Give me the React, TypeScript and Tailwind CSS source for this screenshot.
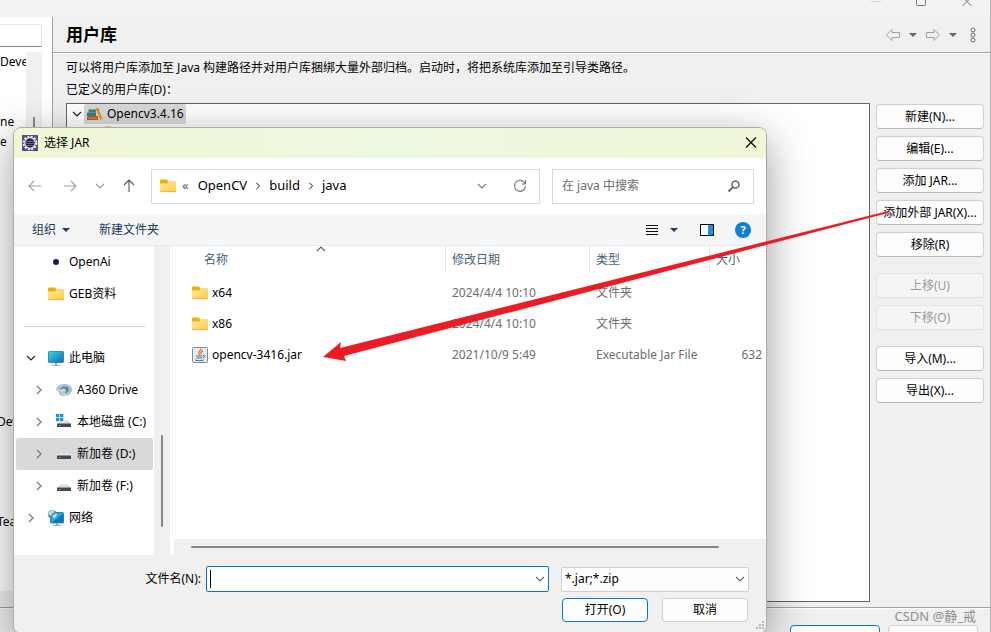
import type { ReactNode } from 'react';

const FONT = "font-['Noto_Sans','Noto_Sans_CJK_SC',sans-serif]";

const SIDE_BUTTONS = [
  [{ label: '新建(N)...' }, { label: '编辑(E)...' }, { label: '添加 JAR...' }, { label: '添加外部 JAR(X)...' }, { label: '移除(R)' }],
  [{ label: '上移(U)', disabled: true }, { label: '下移(O)', disabled: true }],
  [{ label: '导入(M)...' }, { label: '导出(X)...' }],
];

function FolderIcon() {
  return (
    <svg viewBox="0 0 16 14" className="w-4 h-3.5 shrink-0">
      <defs>
        <linearGradient id="folder" x1="0" y1="0" x2="1" y2="1">
          <stop offset="0" stopColor="#ffeaa6" />
          <stop offset="1" stopColor="#ffcb3d" />
        </linearGradient>
      </defs>
      <path d="M0 1.500A1 1 0 0 1 1 .5h5.500a1 1 0 0 1 1 .8L8 2.500h7a1 1 0 0 1 1 1V6H0z" fill="#f3ad0a" />
      <path d="M0 4.500h7L8.500 3H15.500a.5.5 0 0 1 .5.5V12a1 1 0 0 1-1 1H1a1 1 0 0 1-1-1z" fill="url(#folder)" />
      <path d="M0 12.600h16" fill="none" stroke="#e8ad35" strokeWidth=".8" />
    </svg>
  );
}

function MonitorIcon() {
  return (
    <svg viewBox="0 0 16 16" className="size-4 shrink-0">
      <defs>
        <linearGradient id="screen" x1="0" y1="0" x2="1" y2="1">
          <stop offset="0" stopColor="#3adbe0" />
          <stop offset="1" stopColor="#0b66b8" />
        </linearGradient>
      </defs>
      <rect x=".5" y="1.500" width="15" height="11" rx=".8" fill="url(#screen)" stroke="#17809f" strokeWidth=".8" />
      <path d="M7 13h2v2H7z" fill="#9aa7b0" />
      <path d="M4 15.500h8" stroke="#9aa7b0" />
    </svg>
  );
}

function NetworkIcon() {
  return (
    <svg viewBox="0 0 16 16" className="size-4 shrink-0">
      <rect x="2.500" y="2.500" width="13" height="10.500" rx=".8" fill="#22a7dc" stroke="#0f6ea8" strokeWidth=".8" />
      <path d="M4 12.600L15 4v8.600z" fill="#0b75bf" />
      <path d="M8 13h2v2H8z" fill="#9aa7b0" />
      <path d="M5 15.500h8" stroke="#9aa7b0" />
      <circle cx="4.500" cy="4.500" r="4.500" fill="#4a92b8" />
      <path d="M.8 2.600C1.800.8 4 0 6 .4L6.500 2 4 3.500 3 5.500.3 4.500zM5 5l3.600-1.500.3 2L6 8.700 4.500 7z" fill="#b8deea" />
    </svg>
  );
}

function DriveIcon({ system = false }: { system?: boolean }) {
  return (
    <svg viewBox="0 0 16 16" className="size-4 shrink-0">
      <path d="M3.500 6.500h9L15 10H1z" fill="#dfe1e6" />
      <rect x="1" y="9.500" width="14" height="3.500" rx=".6" fill="#45484b" />
      <path d="M3 11.500h1.500" stroke="#3ee04a" />
      {system && (
        <>
          <path d="M0 0h8v8H0z" fill="#fff" />
          <path d="M0 0h3.300v3.300H0zM4 0h3.300v3.300H4zM0 4h3.300v3.300H0zM4 4h3.300v3.300H4z" fill="#0d93e3" />
        </>
      )}
    </svg>
  );
}

function CloudDriveIcon() {
  return (
    <svg viewBox="0 0 16 16" className="size-4 shrink-0">
      <path d="M0 8c.5-3.500 4-6 8.500-6 4.500 0 7.500 2.500 7.500 5.500 0 3.500-3 6.500-8 6.500-3 0-5-1.500-5.500-4C2 9 1 8.500 0 8z" fill="#a9c1ce" />
      <path d="M3.500 7.500C5 4.500 11 3.500 12.500 6.500c1 2.500-1.500 4.500-4 4.500 2-1 2.500-3 1-4-1.500-.8-4-.5-6 .5z" fill="#55809a" />
      <path d="M1 8.200c2-.7 4 0 4.500 1.500.4 1.500 1.500 2.500 4 2.600" fill="none" stroke="#e3edf2" />
      <path d="M6.500 9c0-1 1.500-1.500 2.300-.8" fill="none" stroke="#eef4f7" strokeWidth="1.200" />
    </svg>
  );
}

function JarIcon() {
  return (
    <svg viewBox="0 0 16 16" className="size-4 shrink-0" fill="none">
      <rect x=".5" y=".5" width="15" height="15" rx="1" fill="#e6ecf1" stroke="#7b8c9b" />
      <path d="M9 1.500c1 2-3 2.800-2.200 4.500.3.700 1 1 1 2M11 4c-2 .8-2.500 1.800-1.500 3.200" stroke="#f0781e" strokeWidth="1.400" />
      <path d="M4 9h6.500M4.500 11h5.500M3 13c2 .9 7 .9 9-.2M11 8.500c2.200-.5 2.500 1.800 0 2.300" stroke="#4a6d8c" />
    </svg>
  );
}

function LibraryIcon() {
  return (
    <svg viewBox="0 0 16 14" className="w-4 h-3.5 shrink-0">
      <path d="M1.500 2.500h7.500v3H1.500z" fill="#2f8a6b" />
      <path d="M0 5.500h9V9H0z" fill="#2e7f96" />
      <path d="M1 9h10v4H0v-3z" fill="#bf5b2c" />
      <path d="M1.500 11.200h8.500" stroke="#e0a070" strokeWidth=".8" />
      <path d="M8.500 1.500L11 .5 15.500 11.500 13 13z" fill="#e69a2e" />
      <path d="M10 3.200l2-.8" stroke="#b86f1a" />
    </svg>
  );
}

function EclipseIcon() {
  return (
    <svg viewBox="0 0 16 16" className="size-4 shrink-0">
      <path d="M0 0h16v16H0z" fill="#5d4a80" />
      <circle cx="8" cy="8" r="6.500" fill="none" stroke="#f4f4f4" strokeWidth="1.800" strokeDasharray="1.900 1.500" />
      <circle cx="8" cy="8" r="5.300" fill="#2c2644" stroke="#eee" strokeWidth="1.200" />
      <path d="M4 6.500h8M3.500 8.500h9M4.500 10.500h7" stroke="#6f6a94" strokeWidth=".9" />
    </svg>
  );
}

function Chevron({ dir = 'down', className = '' }: { dir?: 'down' | 'right' | 'up'; className?: string }) {
  const d = { down: 'M1 3l4 4 4-4', right: 'M3 1l4 4-4 4', up: 'M1 7l4-4 4 4' }[dir];
  return (
    <svg viewBox="0 0 10 10" className={`size-2.5 shrink-0 ${className}`} fill="none" stroke="currentColor">
      <path d={d} strokeWidth="1.200" />
    </svg>
  );
}

function Caret({ className = '' }: { className?: string }) {
  return (
    <svg viewBox="0 0 8 4" className={`w-2 h-1 shrink-0 ${className}`} fill="currentColor">
      <path d="M0 0h8L4 4z" />
    </svg>
  );
}

function NavArrow({ d, className }: { d: string; className: string }) {
  return (
    <svg viewBox="0 0 14 14" className={`size-3.5 ${className}`} fill="none" stroke="currentColor" strokeWidth="1.100">
      <path d={d} />
    </svg>
  );
}

function TitleControls() {
  return (
    <div className="h-[17px] bg-[#f3f3f3] flex justify-end pr-[17px]">
      <svg viewBox="0 0 102 8" className="w-[102px] h-2" fill="none" stroke="#777">
        <path d="M0 1.500h10" stroke="#d5d5d5" />
        <path d="M45.500 0v4.500q0 1 1 1h7q1 0 1-1V0" />
        <path d="M91.500 6l9-9M100.500 6l-9-9" />
      </svg>
    </div>
  );
}

// Visible part of the preference tree, one entry per 20px row
const TREE_ROWS: Record<number, string> = { 0: 'Deve', 3: 'ne', 4: 'e', 18: 'Dev', 23: 'Tea' };

function PreferenceTree() {
  return (
    <aside className="w-[53px] shrink-0 bg-white border-r border-[#a0a0a0] flex flex-col overflow-hidden">
      <input aria-label="过滤" className="mt-[7px] mr-[10px] h-[23px] w-[42px] bg-white border border-l-0 border-[#e5e5e5] border-b-[#868686]" />
      <div className="mt-[5px] flex flex-1 min-h-0">
        <ul className="w-[26px] overflow-hidden whitespace-nowrap">
          {Array.from({ length: 26 }, (_, i) => (
            <li key={i} className={`h-5 leading-5 ${i > 10 ? '-ml-[3px]' : ''}`}>
              {TREE_ROWS[i]}
            </li>
          ))}
        </ul>
        <div className="w-4 bg-[#f0f0f0] flex justify-center pt-[65px] pb-24">
          <div className="w-0.5 bg-[#868686]" />
        </div>
      </div>
      <div className="h-4 bg-[#f0f0f0] w-[42px]" />
    </aside>
  );
}

function LibraryPage() {
  return (
    <main className="flex-1 min-w-0 flex flex-col">
      <header className="h-9 shrink-0 flex items-center justify-between pl-[13px] pr-[13px] border-b border-[#a0a0a0] shadow-[0_1px_0_#fff]">
        <h1 className="text-[17px] leading-6 font-bold">用户库</h1>
        <div className="flex items-center text-[#666]">
          <button type="button" aria-label="后退">
            <svg viewBox="0 0 16 14" className="w-4 h-3.5" fill="none" stroke="#a0a0a0">
              <path d="M1.500 7L7 1.500v3h7.500v5H7v3z" strokeLinejoin="round" />
            </svg>
          </button>
          <Caret className="ml-2" />
          <button type="button" aria-label="前进" className="ml-2">
            <svg viewBox="0 0 16 14" className="w-4 h-3.5" fill="none" stroke="#a0a0a0">
              <path d="M14.500 7L9 1.500v3H1.500v5H9v3z" strokeLinejoin="round" />
            </svg>
          </button>
          <Caret className="ml-2" />
          <button type="button" aria-label="菜单" className="ml-3">
            <svg viewBox="0 0 8 16" className="w-2 h-4" fill="#fff" stroke="#666">
              <circle cx="4" cy="3" r="2" />
              <circle cx="4" cy="8" r="2" />
              <circle cx="4" cy="13" r="2" />
            </svg>
          </button>
        </div>
      </header>
      <div className="flex-1 min-h-0 flex flex-col pl-[13px] pr-[6px] pt-1 pb-[5px]">
        <p className="leading-[22px]">可以将用户库添加至 Java 构建路径并对用户库捆绑大量外部归档。启动时，将把系统库添加至引导类路径。</p>
        <p className="leading-[22px]">已定义的用户库(D)：</p>
        <div className="mt-0.5 flex-1 min-h-0 flex gap-1.5">
          <div className="flex-1 bg-white border border-[#646464] pl-[5px] overflow-hidden">
            <div className="flex items-center">
              <Chevron className="text-[#222] mr-[2px]" />
              <div className="h-5 flex items-center gap-1 bg-[#d9d9d9] rounded-[2px] pl-[3px] pr-0.5">
                <LibraryIcon />
                <span className="leading-5">Opencv3.4.16</span>
              </div>
            </div>
            <div className="pl-8 pt-0.5">
              <FolderIcon />
            </div>
          </div>
          <div className="w-[108px] pt-px flex flex-col gap-4">
            {SIDE_BUTTONS.map((group, i) => (
              <div key={i} className="flex flex-col gap-[7px]">
                {group.map(({ label, disabled }: { label: string; disabled?: boolean }) => (
                  <button
                    key={label}
                    type="button"
                    disabled={disabled}
                    className="h-[25px] rounded-[4px] border border-[#d0d0d0] border-b-[#b9b9b9] bg-[#fdfdfd] whitespace-nowrap flex items-center justify-center disabled:bg-[#f5f5f5] disabled:border-[#e2e2e2] disabled:text-[#9b9b9b]"
                  >
                    {label}
                  </button>
                ))}
              </div>
            ))}
          </div>
        </div>
      </div>
    </main>
  );
}

interface PlaceProps {
  icon: ReactNode;
  label: string;
  chevron?: 'down' | 'right';
  nested?: boolean;
  selected?: boolean;
}

function Place({ icon, label, chevron, nested, selected }: PlaceProps) {
  return (
    <li
      className={`h-8 ml-0.5 mr-px flex items-center whitespace-nowrap rounded-[2px] ${nested ? 'pl-[18px]' : 'pl-[10px]'} ${
        selected ? 'bg-[#d9d9d9]' : ''
      }`}
    >
      <span className={`flex justify-center w-2.5 mr-3 ${chevron === 'down' ? 'text-[#222]' : 'text-[#777]'}`}>
        {chevron && <Chevron dir={chevron} />}
      </span>
      {icon}
      <span className="ml-[5px]">{label}</span>
    </li>
  );
}

const FILES = [
  { name: 'x64', date: '2024/4/4 10:10', type: '文件夹', size: '', icon: <FolderIcon /> },
  { name: 'x86', date: '2024/4/4 10:10', type: '文件夹', size: '', icon: <FolderIcon /> },
  { name: 'opencv-3416.jar', date: '2021/10/9 5:49', type: 'Executable Jar File', size: '632', icon: <JarIcon /> },
];

function FileTable() {
  return (
    <table className="w-full table-fixed border-collapse whitespace-nowrap">
      <colgroup>
        <col className="w-[273px]" />
        <col className="w-36" />
        <col className="w-[120px]" />
        <col />
      </colgroup>
      <thead className="text-[#4c607a]">
        <tr className="h-[31px] align-top">
          <th className="p-0 font-normal">
            <div className="h-[27px] flex pl-[31px] border-r border-[#e5e5e5]">
              <span className="w-28 text-left leading-7">名称</span>
              <Chevron dir="up" className="text-[#666] -mt-0.5" />
            </div>
          </th>
          {['修改日期', '类型', '大小'].map((h) => (
            <th key={h} className="p-0 font-normal">
              <div className={`h-[27px] leading-7 text-left pl-1.5 ${h === '大小' ? '' : 'border-r border-[#e5e5e5]'}`}>{h}</div>
            </th>
          ))}
        </tr>
      </thead>
      <tbody className="text-[#6d6d6d]">
        {FILES.map((f) => (
          <tr key={f.name} className="h-[31px]">
            <td className="p-0 pl-[19px]">
              <div className="flex items-center gap-1 text-black">
                {f.icon}
                {f.name}
              </div>
            </td>
            <td className="p-0 pl-1.5">{f.date}</td>
            <td className="p-0 pl-1.5">{f.type}</td>
            <td className="p-0 pr-1 text-right">{f.size}</td>
          </tr>
        ))}
      </tbody>
    </table>
  );
}

function JarDialog() {
  return (
    <section
      role="dialog"
      aria-label="选择 JAR"
      className="absolute left-[13px] top-[127px] -bottom-0.5 w-[754px] rounded-lg border border-[#adadad] bg-[#f0f0f0] overflow-hidden shadow-[0_12px_44px_rgba(0,0,0,0.4)] flex flex-col"
    >
      <div className="h-[30px] shrink-0 flex items-center gap-1.5 pl-2 pr-2 bg-linear-to-r from-[#f1f7d6] via-[#ecf8e0] to-[#f0f7d8]">
        <EclipseIcon />
        <h2 className="flex-1">选择 JAR</h2>
        <button type="button" aria-label="关闭">
          <NavArrow d="M2 1.500l10 10M12 1.500L2 11.500" className="text-black" />
        </button>
      </div>

      <nav className="h-14 shrink-0 bg-white flex items-center pl-[14px] pr-3">
        <button type="button" aria-label="后退">
          <NavArrow d="M13 7H1M6 2L1 7l5 5" className="text-[#a0a0a0]" />
        </button>
        <button type="button" aria-label="前进" className="ml-[21px]">
          <NavArrow d="M1 7h12M8 2l5 5-5 5" className="text-[#a0a0a0]" />
        </button>
        <Chevron className="ml-[18px] text-[#999]" />
        <button type="button" aria-label="上一级" className="ml-[17px]">
          <NavArrow d="M7 13V1M2 6l5-5 5 5" className="text-[#555]" />
        </button>
        <div className="ml-[15px] w-[389px] h-[35px] shrink-0 border border-[#d9d9d9] flex items-center pl-2 pr-3">
          <FolderIcon />
          <ol className="flex-1 flex items-center gap-[7px] ml-1.5 text-[13px]">
            <li className="mr-0.5 text-[#555]">«</li>
            <li>OpenCV</li>
            <li><Chevron dir="right" className="w-2 h-2" /></li>
            <li>build</li>
            <li><Chevron dir="right" className="w-2 h-2" /></li>
            <li>java</li>
          </ol>
          <Chevron className="text-[#777]" />
          <button type="button" aria-label="刷新" className="ml-[26px]">
            <NavArrow d="M12 4.500A5.500 5.500 0 1 0 12.500 7M12.500 1v4h-4" className="text-[#777]" />
          </button>
        </div>
        <label className="ml-3 min-w-0 flex-1 h-[35px] border border-[#d9d9d9] flex items-center pl-[9px] pr-3">
          <input type="search" aria-label="搜索" placeholder="在 java 中搜索" className="min-w-0 flex-1 outline-none placeholder:text-[#6d6d6d]" />
          <svg viewBox="0 0 14 14" className="size-3.5" fill="none" stroke="#666">
            <circle cx="8.500" cy="5.500" r="3.500" strokeWidth="1.500" />
            <path d="M6 8l-4.500 4.500" strokeWidth="1.800" />
          </svg>
        </label>
      </nav>

      <div className="h-8 shrink-0 flex items-center bg-[#f4f5f7] border-b border-[#e7e9ec] pl-[18px] pr-[15px] text-[#1e395b]">
        <button type="button" className="flex items-center gap-1.5">
          组织 <Caret />
        </button>
        <button type="button" className="ml-[29px] mr-auto">新建文件夹</button>
        <svg viewBox="0 0 12 12" className="size-3" stroke="#111">
          <path d="M0 1.500h12M0 4.500h12M0 7.500h12M0 10.500h12" />
        </svg>
        <Caret className="ml-3" />
        <button type="button" aria-label="预览窗格" className="ml-[22px]">
          <svg viewBox="0 0 14 12" className="w-3.5 h-3">
            <path d="M.5.5h13v11H.5z" fill="#fff" stroke="#000" />
            <path d="M8 1h5v10H8z" fill="#1a94e0" />
          </svg>
        </button>
        <button type="button" aria-label="帮助" className="ml-[21px] size-4 rounded-full bg-[#0f80d0] text-white text-[11px] leading-4 font-bold">
          ?
        </button>
      </div>

      <div className="flex-1 min-h-0 flex">
        <ul className="w-[140px] shrink-0 bg-white">
          <Place
            label="OpenAi"
            icon={<span className="w-4 flex justify-center"><span className="size-1.5 rounded-full bg-[#1b1b5e]" /></span>}
          />
          <Place label="GEB资料" icon={<FolderIcon />} />
          <li className="h-8 pl-2.5 pr-[9px] flex items-center" aria-hidden="true">
            <hr className="w-full border-[#d0d0d0]" />
          </li>
          <Place label="此电脑" icon={<MonitorIcon />} chevron="down" />
          <Place label="A360 Drive" icon={<CloudDriveIcon />} chevron="right" nested />
          <Place label="本地磁盘 (C:)" icon={<DriveIcon system />} chevron="right" nested />
          <Place label="新加卷 (D:)" icon={<DriveIcon />} chevron="right" nested selected />
          <Place label="新加卷 (F:)" icon={<DriveIcon />} chevron="right" nested />
          <Place label="网络" icon={<NetworkIcon />} chevron="right" />
        </ul>
        <div className="w-4 bg-[#f0f0f0] flex flex-col items-center justify-end pb-7">
          <div className="w-0.5 h-[92px] rounded bg-[#868686]" />
        </div>
        <div className="flex-1 min-w-0 bg-white pl-0.5 flex flex-col">
          <div className="flex-1 border-l border-[#f0f0f0]">
            <FileTable />
          </div>
          <div className="h-4 ml-0.5 bg-[#f0f0f0] pl-[17px] pr-[47px] pt-[7px]">
            <div className="h-0.5 rounded bg-[#868686]" />
          </div>
        </div>
      </div>

      <form className="h-[78px] shrink-0 pt-[11px] pr-[17px]">
        <div className="flex items-center justify-end">
          <label htmlFor="file-name" className="mr-[5px]">文件名(N):</label>
          <div className="w-[343px] h-[26px] border border-[#0078d4] rounded-[2px] bg-white flex items-center pl-[3px] pr-[3px]">
            <span className="w-px h-[18px] bg-black" />
            <input id="file-name" type="text" className="flex-1 min-w-0 outline-none" />
            <Chevron className="text-[#666]" />
          </div>
          <div className="ml-3 w-[188px] h-[25px] border border-[#d0d0d0] rounded-[2px] bg-[#fdfdfd] flex items-center pl-[3px] pr-[3px]">
            <select aria-label="文件类型" className="flex-1 appearance-none outline-none bg-transparent">
              <option>*.jar;*.zip</option>
            </select>
            <Chevron className="text-[#666]" />
          </div>
        </div>
        <div className="mt-1.5 pr-px flex justify-end gap-[14px]">
          <button type="button" className="w-[86px] h-6 rounded-[4px] border border-[#0078d4] bg-[#fdfdfd]">打开(O)</button>
          <button type="button" className="w-[86px] h-6 rounded-[4px] border border-[#d0d0d0] bg-[#fdfdfd]">取消</button>
        </div>
      </form>

      {/* resize grip */}
      <svg viewBox="0 0 12 12" className="absolute right-0 bottom-0 size-3" fill="#b8b8b8">
        <path d="M8 0h2v2H8zM5 3h2v2H5zM8 3h2v2H8zM2 6h2v2H2zM5 6h2v2H5zM8 6h2v2H8z" />
      </svg>
    </section>
  );
}

export default function App() {
  return (
    <div className={`relative h-screen overflow-hidden flex flex-col bg-[#f0f0f0] border-r border-[#b5b5b5] text-xs text-black ${FONT}`}>
      <TitleControls />
      <div className="flex-1 min-h-0 flex">
        <PreferenceTree />
        <LibraryPage />
      </div>
      <footer className="h-[25px] shrink-0 border-t border-[#a0a0a0] shadow-[inset_0_1px_0_#fff] pt-[17px] pr-3 flex items-start justify-end gap-2">
        <button type="button" className="w-[90px] h-[30px] shrink-0 rounded-[4px] border border-[#0078d4] bg-[#fdfdfd]">应用并关闭</button>
        <button type="button" className="w-[90px] h-[30px] shrink-0 rounded-[4px] border border-[#d0d0d0] bg-[#fdfdfd]" aria-label="取消" />
      </footer>

      <JarDialog />

      {/* pointer from the "add external JAR" button to the file */}
      <svg viewBox="0 0 991 632" className="absolute left-0 top-0 w-[991px] h-[632px] pointer-events-none" fill="#ed1c24">
        <path d="M888 211L340 348l1-6-18 15 23 4-2-5L888 213z" />
      </svg>
      <span className="absolute right-[14px] bottom-1.5 text-[13px] leading-5 text-[#8f8f8f]">CSDN @静_戒</span>
    </div>
  );
}
